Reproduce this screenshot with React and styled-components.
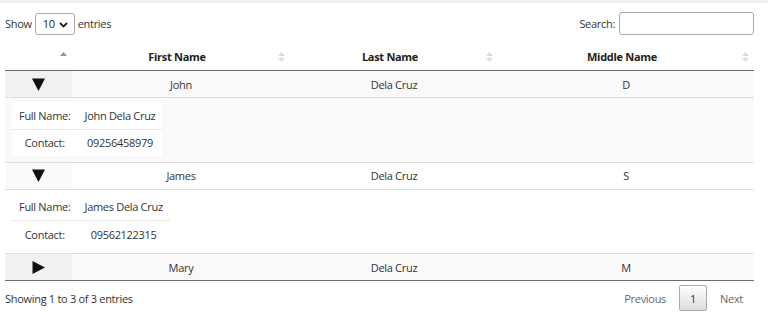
import React from "react";
import styled, { createGlobalStyle } from "styled-components";

const GlobalStyle = createGlobalStyle`
  body {
    margin: 0;
    background: #fff;
    font-family: "Open Sans", "Noto Sans", sans-serif;
    font-size: 11px;
    letter-spacing: -0.3px;
    color: #333;
  }
`;

const TopStrip = styled.div`
  height: 3px;
  background: #eef0f3;
`;

const Wrapper = styled.div`
  width: 749px;
  padding: 9px 0 0 5px;
`;

const Controls = styled.div`
  display: flex;
  justify-content: space-between;
  align-items: center;
  height: 23px;
  margin-bottom: 10px;
`;

const Label = styled.label`
  display: flex;
  align-items: center;
  gap: 3px;
`;

const SelectBox = styled.div`
  position: relative;
  width: 40px;
  height: 22px;
  box-sizing: border-box;
  border: 1px solid #aaa;
  border-radius: 3px;
  display: flex;
  align-items: center;
  padding-left: 7px;
  font-size: 11px;
  color: #222;
  svg {
    position: absolute;
    right: 6px;
    top: 8px;
  }
`;

const SearchInput = styled.input`
  width: 135px;
  height: 23px;
  box-sizing: border-box;
  border: 1px solid #aaa;
  border-radius: 3px;
  margin-left: 1px;
  outline: none;
`;

const Table = styled.table`
  width: 749px;
  table-layout: fixed;
  border-collapse: separate;
  border-spacing: 0;
  border-bottom: 1px solid #6b6b6b;
`;

const Th = styled.th`
  position: relative;
  height: 26px;
  padding: 0 18px 3px 10px;
  box-sizing: border-box;
  font-weight: 700;
  text-align: center;
  color: #222;
  border-bottom: 1px solid #6b6b6b;
  svg {
    position: absolute;
    right: 5px;
    top: 7px;
  }
`;

const Row = styled.tr`
  background: ${(p) => (p.$odd ? "#f9f9f9" : "#fff")};
`;

const Td = styled.td`
  height: ${(p) => (p.$last ? "26px" : "27px")};
  padding: 0 10px;
  box-sizing: border-box;
  text-align: center;
  border-bottom: ${(p) => (p.$last ? "none" : "1px solid #ddd")};
`;

const Toggle = styled(Td)`
  padding: 0;
  background: ${(p) => (p.$odd ? "#f1f1f1" : "#fafafa")};
  svg {
    display: block;
    margin: 0 auto;
  }
`;

const ChildCell = styled.td`
  height: 64.5px;
  padding: 4px 7px 5px;
  box-sizing: border-box;
  vertical-align: top;
  border-bottom: 1px solid #ddd;
`;

const Detail = styled.table`
  border-collapse: collapse;
  background: #fff;
`;

const DetailTd = styled.td`
  height: 27px;
  padding: 0 7px;
  box-sizing: border-box;
  text-align: center;
  white-space: nowrap;
  border-top: ${(p) => (p.$sep ? "1px solid #e8e8e8" : "none")};
`;

const Footer = styled.div`
  display: flex;
  justify-content: space-between;
  align-items: center;
  padding-top: 4px;
`;

const Pager = styled.div`
  display: flex;
  align-items: center;
  margin-right: -2px;
`;

const PageLink = styled.span`
  box-sizing: border-box;
  min-width: 28px;
  height: 26px;
  display: flex;
  align-items: center;
  justify-content: center;
  padding: 0 ${(p) => (p.$current ? "0" : "12px")};
  color: ${(p) => (p.$current ? "#333" : "#666")};
  border: 1px solid ${(p) => (p.$current ? "#aaa" : "transparent")};
  border-radius: 2px;
  background: ${(p) =>
    p.$current ? "linear-gradient(to bottom, #fff 0%, #dcdcdc 100%)" : "transparent"};
`;

const SortIcon = ({ dir }) => (
  <svg width="7" height="10" viewBox="0 0 7 10">
    <polygon points="3.5,0 7,4 0,4" fill={dir === "asc" ? "#8c8ce0" : "#ddd"} />
    {dir !== "asc" && <polygon points="0,6 7,6 3.5,10" fill="#ddd" />}
  </svg>
);

const Arrow = ({ open }) => (
  <svg width="13" height="13" viewBox="0 0 13 13">
    {open ? (
      <polygon points="0,0.5 13,0.5 6.5,13" fill="#111" />
    ) : (
      <polygon points="0.5,0 13,6.5 0.5,13" fill="#111" />
    )}
  </svg>
);

const people = [
  { first: "John", last: "Dela Cruz", middle: "D", contact: "09256458979", open: true },
  { first: "James", last: "Dela Cruz", middle: "S", contact: "09562122315", open: true },
  { first: "Mary", last: "Dela Cruz", middle: "M", contact: "", open: false },
];

export default function App() {
  return (
    <>
      <GlobalStyle />
      <TopStrip />
      <Wrapper>
        <Controls>
          <Label>
            Show
            <SelectBox>
              10
              <svg width="9" height="6" viewBox="0 0 9 6">
                <path d="M1 1l3.5 3.5L8 1" stroke="#222" strokeWidth="1.8" fill="none" />
              </svg>
            </SelectBox>
            entries
          </Label>
          <Label>
            Search:
            <SearchInput type="search" />
          </Label>
        </Controls>
        <Table>
          <colgroup>
            <col style={{ width: 67 }} />
            <col style={{ width: 218 }} />
            <col style={{ width: 208 }} />
            <col style={{ width: 256 }} />
          </colgroup>
          <thead>
            <tr>
              <Th>
                <SortIcon dir="asc" />
              </Th>
              <Th>
                First Name
                <SortIcon />
              </Th>
              <Th>
                Last Name
                <SortIcon />
              </Th>
              <Th>
                Middle Name
                <SortIcon />
              </Th>
            </tr>
          </thead>
          <tbody>
            {people.map((p, i) => {
              const odd = i % 2 === 0;
              const last = i === people.length - 1;
              return (
                <React.Fragment key={p.first}>
                  <Row $odd={odd}>
                    <Toggle $odd={odd} $last={last}>
                      <Arrow open={p.open} />
                    </Toggle>
                    <Td $last={last}>{p.first}</Td>
                    <Td $last={last}>{p.last}</Td>
                    <Td $last={last}>{p.middle}</Td>
                  </Row>
                  {p.open && (
                    <Row $odd={odd}>
                      <ChildCell colSpan={4}>
                        <Detail>
                          <tbody>
                            <tr>
                              <DetailTd>Full Name:</DetailTd>
                              <DetailTd>
                                {p.first} {p.last}
                              </DetailTd>
                            </tr>
                            <tr>
                              <DetailTd $sep>Contact:</DetailTd>
                              <DetailTd $sep>{p.contact}</DetailTd>
                            </tr>
                          </tbody>
                        </Detail>
                      </ChildCell>
                    </Row>
                  )}
                </React.Fragment>
              );
            })}
          </tbody>
        </Table>
        <Footer>
          <span>Showing 1 to 3 of 3 entries</span>
          <Pager>
            <PageLink>Previous</PageLink>
            <PageLink $current>1</PageLink>
            <PageLink>Next</PageLink>
          </Pager>
        </Footer>
      </Wrapper>
    </>
  );
}
